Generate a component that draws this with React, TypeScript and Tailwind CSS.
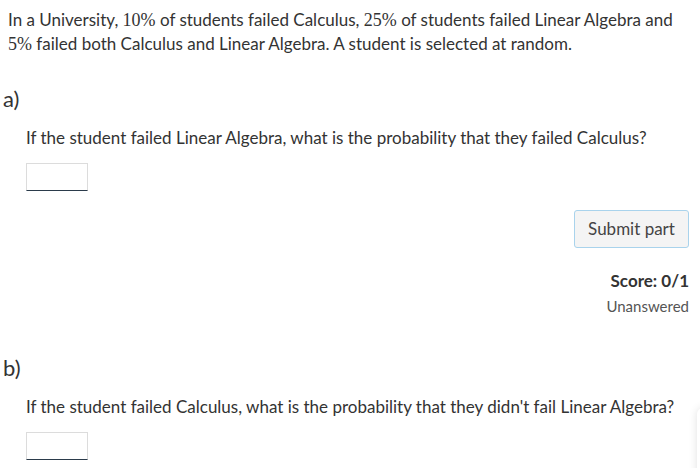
import React from 'react'

const sans = { fontFamily: '"Source Sans Pro", Lato, "Open Sans", sans-serif' }
const serif = { fontFamily: '"Liberation Serif", "DejaVu Serif", serif' }

function M({ children }: { children: React.ReactNode }) {
  return (
    <span className="text-[18px]" style={serif}>
      {children}
    </span>
  )
}

function AnswerBox() {
  return (
    <div className="w-[62px] h-[28px] border border-[#dcdcdc] border-b-[#2b3b4b] bg-white" />
  )
}

export default function App() {
  return (
    <div className="relative w-[700px] h-[468px] bg-white text-[#333] overflow-hidden" style={sans}>
      <p className="pl-2 pr-2 pt-[8px] text-[17px] leading-[24px]">
        In a University, <M>10%</M> of students failed Calculus, <M>25%</M> of students failed Linear Algebra and{' '}
        <M>5%</M> failed both Calculus and Linear Algebra. A student is selected at random.
      </p>

      {/* part a */}
      <div className="mt-[30px]">
        <div className="pl-[3px] text-[22px] leading-[26px]">a)</div>
        <div className="pl-[26px] pr-[11px]">
          <p className="mt-[14px] text-[17px] leading-[24px]">
            If the student failed Linear Algebra, what is the probability that they failed Calculus?
          </p>
          <div className="mt-[13px]">
            <AnswerBox />
          </div>
          <div className="flex justify-end mt-[19px]">
            <button className="w-[115px] h-[38px] rounded-[3px] border border-[#a9d3ec] bg-[#f4f4f4] text-[17px] text-[#444]">
              Submit part
            </button>
          </div>
          <div className="flex flex-col items-end mt-[22px]">
            <div className="text-[17px] leading-[22px] font-bold">Score: 0/1</div>
            <div className="text-[15px] leading-[22px] text-[#555] mt-[3px]">Unanswered</div>
          </div>
        </div>
      </div>

      {/* part b */}
      <div className="mt-[38px]">
        <div className="pl-[3px] text-[22px] leading-[26px]">b)</div>
        <div className="pl-[26px] pr-[11px]">
          <p className="mt-[14px] text-[17px] leading-[24px]">
            If the student failed Calculus, what is the probability that they didn't fail Linear Algebra?
          </p>
          <div className="mt-[13px]">
            <AnswerBox />
          </div>
        </div>
      </div>

      {/* floating element peeking from the right edge */}
      <div className="absolute left-[697px] top-[408px] w-[60px] h-[80px] rounded-md bg-white shadow-[0_0_8px_rgba(0,0,0,0.12)]" />
    </div>
  )
}
